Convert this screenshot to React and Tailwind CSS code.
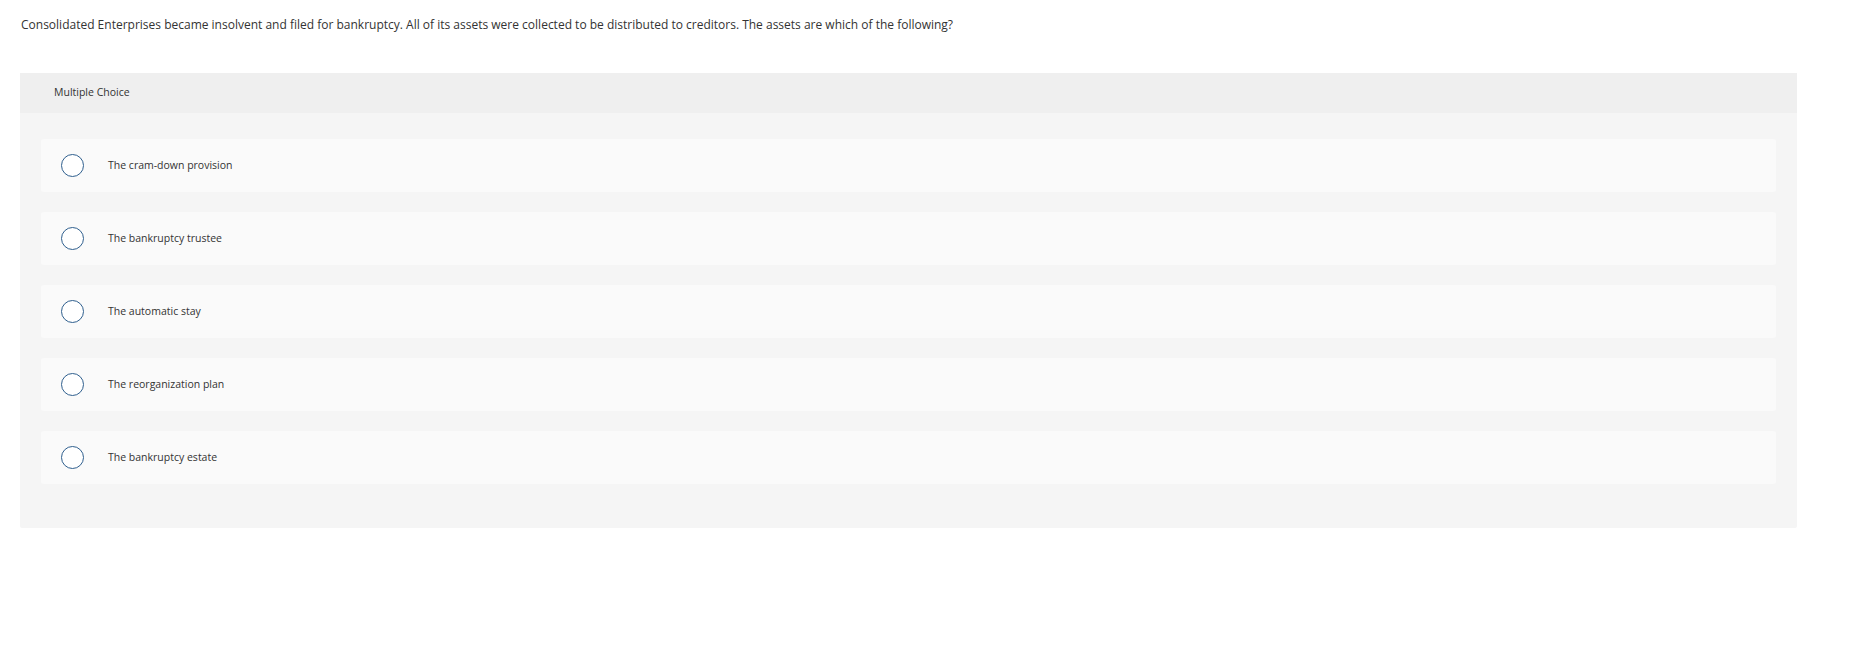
const options = [
  "The cram-down provision",
  "The bankruptcy trustee",
  "The automatic stay",
  "The reorganization plan",
  "The bankruptcy estate",
];

export default function App() {
  return (
    <div className="min-h-[665px] bg-white pt-[16px] font-['Open_Sans',sans-serif] text-[#333]">
      {/* QUESTION */}
      <p className="pl-[21px] text-[12px] leading-[18px]">
        Consolidated Enterprises became insolvent and filed for bankruptcy. All of its assets were collected to be distributed to creditors. The assets are which of the following?
      </p>

      {/* MULTIPLE CHOICE PANEL */}
      <div className="ml-[20px] mt-[39px] w-[1777px] rounded-[2px] bg-[#f5f5f5] pb-[44px]">
        <div className="flex h-[40px] items-center bg-[#efefef] pl-[34px] text-[10.5px]">
          Multiple Choice
        </div>
        <div className="flex flex-col gap-[20px] px-[21px] pt-[26px]">
          {options.map((opt) => (
            <label
              key={opt}
              className="flex h-[53px] cursor-pointer items-center rounded-[3px] bg-[#fafafa] pl-[20px]"
            >
              <span className="h-[23px] w-[23px] shrink-0 rounded-full border-[1.5px] border-[#2f5f8e] bg-white" />
              <span className="ml-[24px] text-[10.5px]">{opt}</span>
            </label>
          ))}
        </div>
      </div>
    </div>
  );
}
